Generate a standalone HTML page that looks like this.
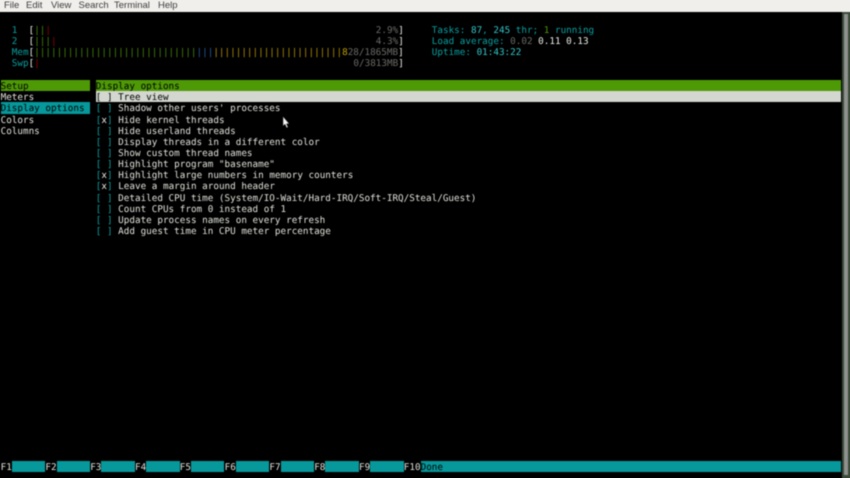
<!DOCTYPE html>
<html><head><meta charset="utf-8"><style>
html,body{margin:0;padding:0;width:850px;height:478px;overflow:hidden;background:#000}
#w{position:absolute;left:0;top:0;width:850px;height:478px;overflow:hidden;contain:strict}
#t{position:absolute;left:-6px;top:-6px;width:862px;height:490px;filter:blur(.4px)}
#i{position:absolute;left:6px;top:6px;width:850px;height:478px}
.r,.b{position:absolute;white-space:pre;font:9.3px/11.2px "DejaVu Sans Mono",monospace;height:11.2px;text-rendering:geometricPrecision;color:#dfe2da}
.r{transform:translate(.6px,1px)}
.h{margin-top:-.8px}
.m{position:absolute;top:0;font:9.5px/12px "Liberation Sans",sans-serif;color:#3c3c3c}
.c{color:#0a9fa1}.w{color:#eeeeec}.g{color:#6a6c68}.k{color:#000}.v{color:#43850a}.e{color:#960000}.u{color:#2a5a9f}.o{color:#b08f00}.o8{color:#c4a000}.l{color:#34c5c8}.n{color:#4e9a06}
</style></head><body>
<div id="w"><div id="t"><div id="i">
<div style="position:absolute;left:-6px;top:-6px;width:862px;height:18px;background:#f0efec"></div>
<span class="m" style="left:4px">File</span><span class="m" style="left:26px">Edit</span><span class="m" style="left:51px">View</span><span class="m" style="left:78.5px">Search</span><span class="m" style="left:114px">Terminal</span><span class="m" style="left:158px">Help</span>
<div style="position:absolute;left:842px;top:12px;width:14px;height:472px;background:#3b4a39"></div>
<div style="position:absolute;left:844px;top:14px;width:4px;height:461px;background:#8f918f"></div>

<div class="r h" style="left:0;top:24.6px"><span class="c">  1  </span><span class="w">[</span><span class="v">||</span><span class="e">|</span></div>
<div class="r g h" style="left:375.2px;top:24.6px">2.9%</div>
<div class="r w h" style="left:397.6px;top:24.6px">]</div>
<div class="r h" style="left:431.2px;top:24.6px"><span class="c">Tasks: </span><span class="l">87</span><span class="c">, </span><span class="l">245</span><span class="c"> thr; </span><span class="n">1</span><span class="c"> running</span></div>

<div class="r h" style="left:0;top:35.8px"><span class="c">  2  </span><span class="w">[</span><span class="v">|||</span><span class="e">|</span></div>
<div class="r g h" style="left:375.2px;top:35.8px">4.3%</div>
<div class="r w h" style="left:397.6px;top:35.8px">]</div>
<div class="r h" style="left:431.2px;top:35.8px"><span class="c">Load average: </span><span class="g">0.02 </span><span class="w">0.11 </span><span class="w">0.13</span></div>

<div class="r h" style="left:0;top:47px"><span class="c">  Mem</span><span class="w">[</span><span class="v">|||||||||||||||||||||||||||||</span><span class="u">|||</span><span class="o">|||||||||||||||||||||||</span><span class="o8">8</span><span class="g">28/1865MB</span><span class="w">]</span></div>
<div class="r h" style="left:431.2px;top:47px"><span class="c">Uptime: </span><span class="l">01:43:22</span></div>

<div class="r h" style="left:0;top:58.2px"><span class="c">  Swp</span><span class="w">[</span><span class="e">|</span></div>
<div class="r g h" style="left:352.8px;top:58.2px">0/3813MB</div>
<div class="r w h" style="left:397.6px;top:58.2px">]</div>

<div class="b" style="left:1px;top:80px;width:89px;background:#4e9a06"></div>
<div class="b" style="left:95.6px;top:80px;width:745.2px;background:#4e9a06"></div>
<div class="b" style="left:95.6px;top:91.2px;width:745.2px;background:#d3d7cf"></div>
<div class="b" style="left:1px;top:102.4px;width:89px;background:#06989a"></div>

<div class="r k" style="left:0;top:80px">Setup</div>
<div class="r k" style="left:95.2px;top:80px">Display options</div>
<div class="r" style="left:0;top:91.2px">Meters</div>
<div class="r k" style="left:0;top:102.35px">Display options</div>
<div class="r" style="left:0;top:113.5px">Colors</div>
<div class="r" style="left:0;top:124.65px">Columns</div>

<div class="r k" style="left:95.2px;top:91.2px">[ ] Tree view</div>
<div class="r" style="left:95.2px;top:102.35px"><span class="c">[ ]</span> Shadow other users' processes</div>
<div class="r" style="left:95.2px;top:113.5px"><span class="c">[</span><span class="w">x</span><span class="c">]</span> Hide kernel threads</div>
<div class="r" style="left:95.2px;top:124.65px"><span class="c">[ ]</span> Hide userland threads</div>
<div class="r" style="left:95.2px;top:135.8px"><span class="c">[ ]</span> Display threads in a different color</div>
<div class="r" style="left:95.2px;top:146.95px"><span class="c">[ ]</span> Show custom thread names</div>
<div class="r" style="left:95.2px;top:158.1px"><span class="c">[ ]</span> Highlight program "basename"</div>
<div class="r" style="left:95.2px;top:169.25px"><span class="c">[</span><span class="w">x</span><span class="c">]</span> Highlight large numbers in memory counters</div>
<div class="r" style="left:95.2px;top:180.4px"><span class="c">[</span><span class="w">x</span><span class="c">]</span> Leave a margin around header</div>
<div class="r" style="left:95.2px;top:191.55px"><span class="c">[ ]</span> Detailed CPU time (System/IO-Wait/Hard-IRQ/Soft-IRQ/Steal/Guest)</div>
<div class="r" style="left:95.2px;top:202.7px"><span class="c">[ ]</span> Count CPUs from 0 instead of 1</div>
<div class="r" style="left:95.2px;top:213.85px"><span class="c">[ ]</span> Update process names on every refresh</div>
<div class="r" style="left:95.2px;top:225px"><span class="c">[ ]</span> Add guest time in CPU meter percentage</div>

<div class="b" style="left:11.8px;top:460.6px;width:33.4px;background:#06989a"></div>
<div class="b" style="left:56.6px;top:460.6px;width:33.4px;background:#06989a"></div>
<div class="b" style="left:101.4px;top:460.6px;width:33.4px;background:#06989a"></div>
<div class="b" style="left:146.2px;top:460.6px;width:33.4px;background:#06989a"></div>
<div class="b" style="left:191px;top:460.6px;width:33.4px;background:#06989a"></div>
<div class="b" style="left:235.8px;top:460.6px;width:33.4px;background:#06989a"></div>
<div class="b" style="left:280.6px;top:460.6px;width:33.4px;background:#06989a"></div>
<div class="b" style="left:325.4px;top:460.6px;width:33.4px;background:#06989a"></div>
<div class="b" style="left:370.2px;top:460.6px;width:33.4px;background:#06989a"></div>
<div class="b" style="left:420.6px;top:460.6px;width:420.2px;background:#06989a"></div>
<div class="r" style="left:0;top:460.6px">F1</div>
<div class="r" style="left:44.8px;top:460.6px">F2</div>
<div class="r" style="left:89.6px;top:460.6px">F3</div>
<div class="r" style="left:134.4px;top:460.6px">F4</div>
<div class="r" style="left:179.2px;top:460.6px">F5</div>
<div class="r" style="left:224px;top:460.6px">F6</div>
<div class="r" style="left:268.8px;top:460.6px">F7</div>
<div class="r" style="left:313.6px;top:460.6px">F8</div>
<div class="r" style="left:358.4px;top:460.6px">F9</div>
<div class="r" style="left:403.2px;top:460.6px">F10</div>
<div class="r k" style="left:420px;top:460.6px">Done</div>

<svg style="position:absolute;left:282px;top:116px" width="9" height="13" viewBox="0 0 9 13"><path d="M1 .5V10L3 8.2 4.6 11.8 6 11.2 4.5 7.8H7.2Z" fill="#f4f4f4" stroke="#222" stroke-width=".5"/></svg>
</div></div></div>
</body></html>
